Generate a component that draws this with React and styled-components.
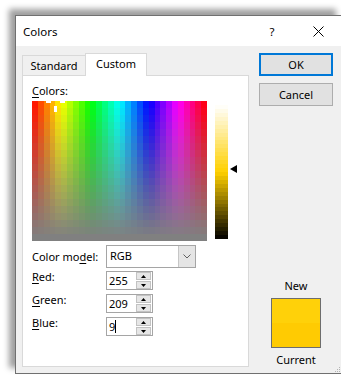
import React from 'react';
import styled, { createGlobalStyle } from 'styled-components';

const Global = createGlobalStyle`
  html, body { margin: 0; padding: 0; background: #fff; }
  body { font-family: "Noto Sans", "Segoe UI", sans-serif; font-size: 11px; color: #000; }
`;

const Page = styled.div`
  width: 341px;
  height: 375px;
  overflow: hidden;
  box-sizing: border-box;
  padding: 15px 0 0 15px;
  background: #fff;
`;

const Dialog = styled.div`
  position: relative;
  width: 327px;
  height: 359px;
  box-sizing: border-box;
  border: 1px solid #707070;
  background: #f0f0f0;
  display: flex;
  flex-direction: column;
  box-shadow: -6px -6px 6px rgba(0, 0, 0, 0.38);
`;

const TitleBar = styled.div`
  height: 30px;
  flex-shrink: 0;
  background: #fff;
  display: flex;
  align-items: center;
`;

const Title = styled.div`
  flex: 1;
  padding-left: 7px;
  font-size: 11.5px;
  line-height: 15px;
`;

const TitleButton = styled.div`
  width: 46px;
  height: 30px;
  display: flex;
  align-items: center;
  justify-content: center;
  font-size: 11.5px;
  line-height: 15px;
`;

const Body = styled.div`
  flex: 1;
  display: flex;
  gap: 10px;
  padding: 7px 8px 6px 6px;
  min-height: 0;
`;

const LeftCol = styled.div`
  width: 227px;
  display: flex;
  flex-direction: column;
`;

const TabRow = styled.div`
  height: 22px;
  display: flex;
  align-items: flex-end;
  position: relative;
  z-index: 1;
`;

const Tab = styled.div`
  box-sizing: border-box;
  width: ${(p) => (p.$active ? 62 : 64)}px;
  height: ${(p) => (p.$active ? 23 : 20)}px;
  margin-bottom: ${(p) => (p.$active ? -1 : 0)}px;
  margin-left: ${(p) => (p.$active ? -1 : 0)}px;
  border: 1px solid #d9d9d9;
  border-bottom: none;
  background: ${(p) => (p.$active ? '#fff' : '#f0f0f0')};
  padding-top: 2px;
  text-align: center;
  line-height: 15px;
`;

const Panel = styled.div`
  flex: 1;
  box-sizing: border-box;
  border: 1px solid #d9d9d9;
  background: #fff;
  padding: 7px 0 0 9px;
  display: flex;
  flex-direction: column;
`;

const U = styled.span`
  text-decoration: underline;
  text-underline-offset: 2px;
`;

const PanelLabel = styled.div`
  line-height: 15px;
  margin-bottom: 3px;
`;

const SpectrumRow = styled.div`
  display: flex;
  height: 140px;
`;

const LumArea = styled.div`
  position: relative;
  margin: 4px 0 0 8px;
  width: 13px;
  height: 134px;
`;

const Pointer = styled.svg`
  position: absolute;
  left: 15px;
  top: 60px;
`;

const FieldRow = styled.div`
  display: flex;
  align-items: flex-start;
  margin-top: ${(p) => p.$gap}px;
`;

const FieldLabel = styled.div`
  width: 74px;
  line-height: 15px;
  margin-top: ${(p) => p.$offset}px;
`;

const Select = styled.div`
  box-sizing: border-box;
  width: 90px;
  height: 23px;
  border: 1px solid #a5a5a5;
  background: #fff;
  display: flex;
`;

const SelectValue = styled.div`
  flex: 1;
  padding: 2px 0 0 3px;
  line-height: 15px;
`;

const SelectButton = styled.div`
  width: 17px;
  box-sizing: border-box;
  background: #e5e5e5;
  border-left: 1px solid #c6c6c6;
  display: flex;
  align-items: center;
  justify-content: center;
`;

const SpinBox = styled.div`
  box-sizing: border-box;
  width: 47px;
  height: 19px;
  border: 1px solid #a5a5a5;
  background: #fff;
  display: flex;
  padding-right: 1px;
`;

const SpinValue = styled.div`
  flex: 1;
  padding: 1px 0 0 2px;
  line-height: 15px;
  display: flex;
  align-items: flex-start;
`;

const Caret = styled.span`
  display: inline-block;
  width: 1px;
  height: 13px;
  margin-top: 1px;
  background: #000;
`;

const SpinButtons = styled.div`
  width: 15px;
  display: flex;
  flex-direction: column;
  gap: 1px;
`;

const SpinBtn = styled.div`
  flex: 1;
  box-sizing: border-box;
  background: #e6e6e6;
  border: 1px solid #c2c2c2;
  display: flex;
  align-items: center;
  justify-content: center;
`;

const RightCol = styled.div`
  width: 74px;
  display: flex;
  flex-direction: column;
`;

const Button = styled.div`
  box-sizing: border-box;
  height: 23px;
  margin-top: ${(p) => (p.$default ? 0 : 7)}px;
  background: #e1e1e1;
  border: ${(p) => (p.$default ? '2px solid #0078d7' : '1px solid #adadad')};
  display: flex;
  align-items: center;
  justify-content: center;
  line-height: 15px;
`;

const Spacer = styled.div`
  flex: 1;
`;

const SwatchGroup = styled.div`
  display: flex;
  flex-direction: column;
  align-items: center;
`;

const SwatchLabel = styled.div`
  line-height: 15px;
`;

const Swatch = styled.div`
  box-sizing: border-box;
  width: 50px;
  height: 50px;
  margin: 5px 0 4px;
  border: 1px solid #6d6d6d;
  background: linear-gradient(#ffd109 0 50%, #ffcb02 50% 100%);
`;

const Grip = styled.svg`
  position: absolute;
  right: 0;
  bottom: 0;
`;

function Spectrum() {
  const cols = 30;
  const rows = 20;
  const w = 175 / cols;
  const h = 140 / rows;
  const rects = [];
  for (let j = 0; j < rows; j++) {
    const s = 100 - (j * 100) / (rows - 1);
    for (let i = 0; i < cols; i++) {
      const hue = ((i + 0.5) * 360) / cols;
      rects.push(
        <rect key={`${i}-${j}`} x={i * w} y={j * h} width={w + 0.5} height={h + 0.5}
          fill={`hsl(${hue} ${s}% 50%)`} />
      );
    }
  }
  return (
    <svg width="175" height="140" shapeRendering="crispEdges" style={{ display: 'block' }}>
      {rects}
      <rect x="14" y="0" width="5" height="2" fill="#fff" />
      <rect x="28" y="0" width="5" height="2" fill="#fff" />
      <rect x="22" y="5" width="3" height="6" fill="#fff" />
    </svg>
  );
}

function LumBar() {
  const steps = 34;
  const h = 134 / steps;
  const rects = [];
  for (let i = 0; i < steps; i++) {
    const l = 100 - ((i + 0.5) * 100) / steps;
    rects.push(
      <rect key={i} x="0" y={i * h} width="13" height={h + 0.5} fill={`hsl(49 100% ${l}%)`} />
    );
  }
  return (
    <svg width="13" height="134" shapeRendering="crispEdges" style={{ display: 'block' }}>
      {rects}
    </svg>
  );
}

function Triangle({ up }) {
  return (
    <svg width="5" height="3" style={{ display: 'block' }}>
      <polygon points={up ? '0,3 2.5,0 5,3' : '0,0 2.5,3 5,0'} fill="#000" />
    </svg>
  );
}

function Spin({ value, caret }) {
  return (
    <SpinBox>
      <SpinValue>
        {value}
        {caret && <Caret />}
      </SpinValue>
      <SpinButtons>
        <SpinBtn><Triangle up /></SpinBtn>
        <SpinBtn><Triangle /></SpinBtn>
      </SpinButtons>
    </SpinBox>
  );
}

export default function App() {
  return (
    <Page>
      <Global />
      <Dialog>
        <TitleBar>
          <Title>Colors</Title>
          <TitleButton>?</TitleButton>
          <TitleButton>
            <svg width="11" height="11" style={{ display: 'block' }}>
              <path d="M0.5 0.5 L10.5 10.5 M10.5 0.5 L0.5 10.5" stroke="#000" strokeWidth="1" />
            </svg>
          </TitleButton>
        </TitleBar>
        <Body>
          <LeftCol>
            <TabRow>
              <Tab>Standard</Tab>
              <Tab $active>Custom</Tab>
            </TabRow>
            <Panel>
              <PanelLabel><U>C</U>olors:</PanelLabel>
              <SpectrumRow>
                <Spectrum />
                <LumArea>
                  <LumBar />
                  <Pointer width="7" height="8">
                    <polygon points="0,4 7,0 7,8" fill="#000" />
                  </Pointer>
                </LumArea>
              </SpectrumRow>
              <FieldRow $gap={4}>
                <FieldLabel $offset={4}>Color mo<U>d</U>el:</FieldLabel>
                <Select>
                  <SelectValue>RGB</SelectValue>
                  <SelectButton>
                    <svg width="8" height="5" style={{ display: 'block' }}>
                      <polyline points="0.5,0.5 4,4 7.5,0.5" fill="none" stroke="#606060" strokeWidth="1" />
                    </svg>
                  </SelectButton>
                </Select>
              </FieldRow>
              <FieldRow $gap={3}>
                <FieldLabel $offset={-2}><U>R</U>ed:</FieldLabel>
                <Spin value="255" />
              </FieldRow>
              <FieldRow $gap={4}>
                <FieldLabel $offset={-2}><U>G</U>reen:</FieldLabel>
                <Spin value="209" />
              </FieldRow>
              <FieldRow $gap={4}>
                <FieldLabel $offset={-2}><U>B</U>lue:</FieldLabel>
                <Spin value="9" caret />
              </FieldRow>
            </Panel>
          </LeftCol>
          <RightCol>
            <Button $default>OK</Button>
            <Button>Cancel</Button>
            <Spacer />
            <SwatchGroup>
              <SwatchLabel>New</SwatchLabel>
              <Swatch />
              <SwatchLabel>Current</SwatchLabel>
            </SwatchGroup>
          </RightCol>
        </Body>
        <Grip width="7" height="7">
          <g fill="#b4b4b4">
            <rect x="5" y="1" width="1" height="1" />
            <rect x="3" y="3" width="1" height="1" />
            <rect x="5" y="3" width="1" height="1" />
            <rect x="1" y="5" width="1" height="1" />
            <rect x="3" y="5" width="1" height="1" />
            <rect x="5" y="5" width="1" height="1" />
          </g>
        </Grip>
      </Dialog>
    </Page>
  );
}
